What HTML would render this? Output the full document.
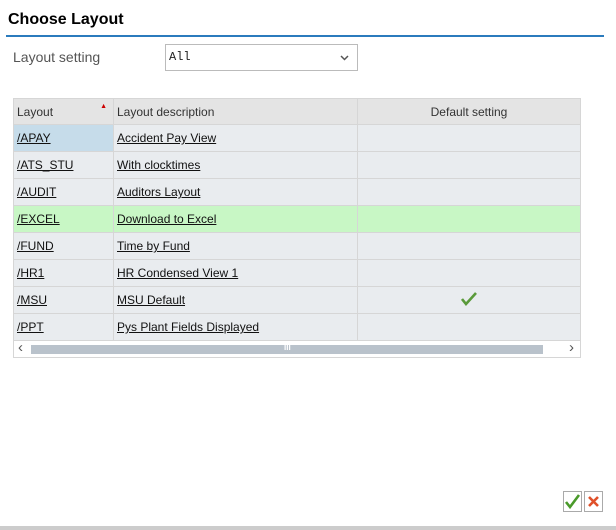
<!DOCTYPE html>
<html><head><style>
*{margin:0;padding:0;box-sizing:border-box}
body{width:616px;height:530px;background:#fff;font-family:"Liberation Sans",Arial,sans-serif;position:relative;overflow:hidden;font-size:12px;color:#222}
.t{position:absolute;left:8px;top:11px;font-size:16px;font-weight:bold;color:#000}
.bl{position:absolute;left:6px;top:35px;width:598px;height:2px;background:#2b7bbd}
.lbl{position:absolute;left:13px;top:49px;font-size:14px;color:#555}
.sel{position:absolute;left:165px;top:44px;width:193px;height:27px;border:1px solid #bbb;font-family:"Liberation Mono",monospace;font-size:12px;padding:5px 0 0 3px}
.sel svg{position:absolute;right:8px;top:10px}
table{position:absolute;left:13px;top:98px;border-collapse:collapse;width:568px}
td,th{height:27px;border:1px solid #d6d6d6;font-weight:normal;text-align:left;padding:0 3px;white-space:nowrap}
th{background:#e4e4e4;color:#333;height:26px}
td{background:#e9ecef}
td u{color:#111}
tr.g td{background:#c8f7c5}
td.s{background:#c6dcea}
.sb{position:absolute;left:13px;top:341px;width:568px;height:17px;border:1px solid #d6d6d6;border-top:none;background:#fff}
.th{position:absolute;left:17px;top:4px;width:512px;height:9px;background:#b9c2cb}
.bot{position:absolute;left:0;top:526px;width:616px;height:4px;background:#ccc}
.btn{position:absolute;top:491px;width:19px;height:21px;border:1px solid #aaa;background:#fff}
</style></head><body>
<div class="t">Choose Layout</div>
<div class="bl"></div>
<div class="lbl">Layout setting</div>
<div class="sel">All<svg width="9" height="6" viewBox="0 0 9 6"><path d="M1 1l3.5 3.5L8 1" stroke="#555" stroke-width="1.5" fill="none"/></svg></div>
<table>
<tr><th style="width:100px;position:relative">Layout<span style="position:absolute;right:6px;top:4px;color:#c00;font-size:7px">▲</span></th><th style="width:244px">Layout description</th><th style="text-align:center">Default setting</th></tr>
<tr><td class="s"><u>/APAY</u></td><td><u>Accident Pay View</u></td><td></td></tr>
<tr><td><u>/ATS_STU</u></td><td><u>With clocktimes</u></td><td></td></tr>
<tr><td><u>/AUDIT</u></td><td><u>Auditors Layout</u></td><td></td></tr>
<tr class="g"><td><u>/EXCEL</u></td><td><u>Download to Excel</u></td><td></td></tr>
<tr><td><u>/FUND</u></td><td><u>Time by Fund</u></td><td></td></tr>
<tr><td><u>/HR1</u></td><td><u>HR Condensed View 1</u></td><td></td></tr>
<tr><td><u>/MSU</u></td><td><u>MSU Default</u></td><td style="text-align:center"><svg width="16" height="14" viewBox="0 0 16 14" style="margin-top:-4px;vertical-align:middle"><path d="M1 7l4 5L15 1" stroke="#5a9a3a" stroke-width="2.6" fill="none"/></svg></td></tr>
<tr><td><u>/PPT</u></td><td><u>Pys Plant Fields Displayed</u></td><td></td></tr>
</table>
<div class="sb"><span style="position:absolute;left:4px;top:-2px;font-size:15px;color:#555">‹</span><div class="th"></div><span style="position:absolute;left:270px;top:2px;font-size:8px;color:#fff;font-weight:bold">III</span><span style="position:absolute;right:6px;top:-2px;font-size:15px;color:#555">›</span></div>
<div class="btn" style="left:563px"><svg width="17" height="19" viewBox="0 0 17 19"><path d="M2 10l4 5L15 3" stroke="#4a9a2a" stroke-width="2.6" fill="none"/></svg></div>
<div class="btn" style="left:584px"><svg width="17" height="19" viewBox="0 0 17 19"><path d="M4 5l9 9M13 5l-9 9" stroke="#e0502a" stroke-width="2.6" fill="none"/></svg></div>
<div class="bot"></div>
</body></html>
